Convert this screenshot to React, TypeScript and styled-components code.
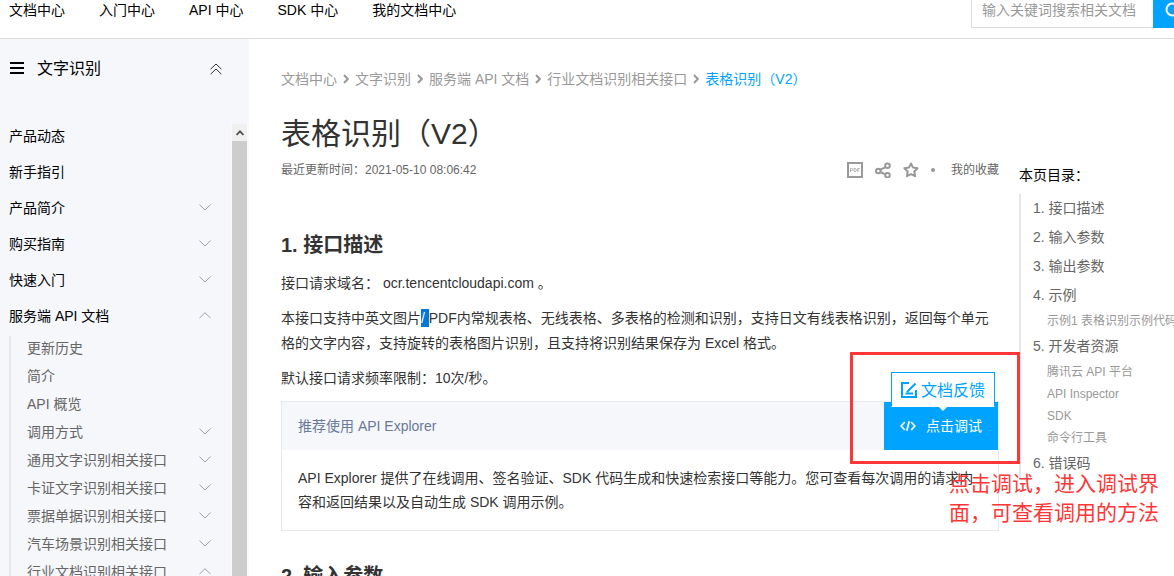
import React from "react";
import styled, { createGlobalStyle } from "styled-components";

const BLUE = "#00a4ff";
const RED = "#fd3737";

const GlobalStyle = createGlobalStyle`
  * { box-sizing: border-box; }
  body {
    margin: 0;
    background: #fff;
    color: #333;
    font: 14px/20px "Liberation Sans", "Noto Sans CJK SC", sans-serif;
  }
  h1, h2, p, ul, ol { margin: 0; padding: 0; }
  ul, ol { list-style: none; }
  a { color: inherit; text-decoration: none; }
  button, input { font: inherit; color: inherit; border: 0; padding: 0; background: none; border-radius: 0; }
  button { cursor: pointer; }
  svg { display: block; flex: none; }
`;

const Page = styled.div`
  height: 100vh;
  display: flex;
  flex-direction: column;
  overflow: hidden;
`;

const Header = styled.header`
  display: flex;
  flex: none;
  justify-content: space-between;
  align-items: flex-start;
  height: 39px;
  border-bottom: 1px solid #dcdcdc;
  overflow: hidden;
`;

const TopNav = styled.nav`
  display: flex;
  gap: 34px;
  padding-left: 9px;
  color: #000;
  white-space: nowrap;
`;

const SearchForm = styled.form`
  display: flex;
  flex: none;
  height: 28px;
  margin-right: -24px;
`;

const SearchInput = styled.input`
  width: 182px;
  height: 28px;
  padding: 0 0 7px 10px;
  border: solid #dcdcdc;
  border-width: 0 0 1px 1px;
  outline: 0;
  &::placeholder { color: #999; opacity: 1; }
`;

const SearchButton = styled.button`
  width: 45px;
  padding: 2px 0 0 12px;
  background: ${BLUE};
  display: flex;
`;

const Columns = styled.div`
  display: flex;
  flex: 1;
  min-height: 0;
`;

const Sidebar = styled.aside`
  width: 249px;
  flex: none;
  display: flex;
  flex-direction: column;
  background: #f5f7fb;
  color: #000;
`;

const SidebarHead = styled.div`
  display: flex;
  align-items: center;
  gap: 12px;
  height: 59px;
  flex: none;
  padding: 0 27px 0 9px;
  font-size: 16px;
  & > button { margin-left: auto; }
`;

const SidebarBody = styled.div`
  display: flex;
  flex: 1;
  min-height: 0;
  margin-top: 20px;
  overflow: hidden;
`;

const Tree = styled.ul`
  flex: 1;
  padding-left: 9px;
`;

const rowStyle = `
  display: flex;
  align-items: center;
  justify-content: space-between;
  width: 100%;
  padding-right: 20px;
  text-align: left;
  white-space: nowrap;
`;

const TreeLink = styled.a<{ $sub?: boolean }>`
  ${rowStyle}
  height: ${(p) => (p.$sub ? 24 : 36)}px;
`;

const TreeToggle = styled.button<{ $sub?: boolean }>`
  ${rowStyle}
  height: ${(p) => (p.$sub ? 24 : 36)}px;
`;

const SubTree = styled.ul`
  display: flex;
  flex-direction: column;
  gap: 4px;
  margin-top: 2px;
  padding-left: 16px;
  border-left: 2px solid #e5e8ed;
  color: #666;
`;

const ScrollTrack = styled.div`
  width: 18px;
  margin-top: 6px;
  padding: 0 2px 0 1px;
  background: #fafafa;
  display: flex;
  flex-direction: column;
`;

const ScrollUp = styled.button`
  height: 17px;
  display: flex;
  align-items: center;
  justify-content: center;
  background: #f0f0f0;
`;

const ScrollThumb = styled.div`
  flex: 1;
  background: #cdcdcd;
`;

const Main = styled.main`
  display: flex;
  flex: 1;
  min-width: 0;
  gap: 20px;
  padding-left: 32px;
`;

const Article = styled.article`
  flex: 1;
  min-width: 0;
  padding-top: 30px;
`;

const Crumbs = styled.nav`
  display: flex;
  align-items: center;
  gap: 6px;
  color: #999;
  white-space: nowrap;
  & > a[aria-current] { color: ${BLUE}; }
`;

const Title = styled.h1`
  margin-top: 25px;
  font-size: 30px;
  line-height: 40px;
  font-weight: 400;
`;

const Meta = styled.div`
  display: flex;
  align-items: center;
  justify-content: space-between;
  margin-top: 6px;
  font-size: 12px;
  color: #666;
`;

const Tools = styled.div`
  display: flex;
  align-items: center;
  gap: 12px;
  color: #999;
  & > a { color: #666; margin-left: 4px; }
`;

const Dot = styled.span`
  width: 4px;
  height: 4px;
  border-radius: 2px;
  background: #999;
`;

const Heading = styled.h2<{ $first?: boolean }>`
  margin-top: ${(p) => (p.$first ? 51 : 31)}px;
  font-size: 20px;
  line-height: 28px;
  font-weight: 700;
`;

const Prose = styled.div`
  display: flex;
  flex-direction: column;
  gap: 10px;
  padding: 12px 0 10px;
  line-height: 25px;
`;

const Selected = styled.mark`
  padding: 1px 0;
  background: #0078d7;
  color: #fff;
`;

const Explorer = styled.section`
  position: relative;
  border: 1px solid #e5e8ed;
`;

const ExplorerHead = styled.div`
  display: flex;
  justify-content: space-between;
  align-items: center;
  height: 48px;
  padding-left: 16px;
  background: #f5f7fb;
  color: #6b7a99;
`;

const DebugButton = styled.button`
  display: flex;
  align-items: center;
  gap: 10px;
  height: 48px;
  padding: 0 16px;
  background: ${BLUE};
  color: #fff;
`;

const ExplorerText = styled.p`
  padding: 16px;
  line-height: 24px;
`;

const Feedback = styled.button`
  position: absolute;
  z-index: 1;
  top: -30px;
  right: 3px;
  display: flex;
  align-items: center;
  gap: 4px;
  height: 35px;
  padding: 2px 9px 0;
  border: 1px solid ${BLUE};
  border-bottom-color: #fff;
  background: #fff;
  color: ${BLUE};
  font-size: 16px;
  white-space: nowrap;
  &::after {
    content: "";
    position: absolute;
    top: 100%;
    left: 50%;
    margin-left: -5px;
    border: 5px solid transparent;
    border-top-color: #fff;
    border-bottom: 0;
  }
`;

const RedFrame = styled.div`
  position: absolute;
  z-index: 2;
  top: -50px;
  right: -22px;
  width: 170px;
  height: 112px;
  border: 3px solid ${RED};
  pointer-events: none;
`;

const RedNote = styled.p`
  position: absolute;
  z-index: 2;
  top: 67px;
  right: -162px;
  width: 211px;
  font-size: 21px;
  line-height: 29px;
  color: ${RED};
  pointer-events: none;
`;

const Toc = styled.aside`
  width: 155px;
  flex: none;
  padding-top: 126px;
  white-space: nowrap;
  overflow: hidden;
`;

const TocTitle = styled.div`
  color: #000;
`;

const TocList = styled.ol`
  margin-top: 9px;
  padding-left: 12px;
  border-left: 2px solid #e5e5e5;
  line-height: 29px;
  color: #666;
`;

const TocSub = styled.ol`
  padding-left: 14px;
  font-size: 12px;
  line-height: 22px;
  color: #999;
`;

const Block = styled.a`
  display: block;
`;

const Chevron = ({ up }: { up?: boolean }) => (
  <svg width="12" height="8" viewBox="0 0 12 8" fill="none" stroke="#9a9fa8">
    <path d={up ? "M.5 6 6 .7 11.5 6" : "M.5 .7 6 6 11.5 .7"} />
  </svg>
);

const CrumbArrow = () => (
  <svg width="6" height="10" viewBox="0 0 6 10" fill="none" stroke="#999" strokeWidth="2">
    <path d="M1 1l3.800 4L1 9" />
  </svg>
);

type Node = { label: string; state?: "open" | "closed"; children?: Node[] };

const tree: Node[] = [
  { label: "产品动态" },
  { label: "新手指引" },
  { label: "产品简介", state: "closed" },
  { label: "购买指南", state: "closed" },
  { label: "快速入门", state: "closed" },
  {
    label: "服务端 API 文档",
    state: "open",
    children: [
      { label: "更新历史" },
      { label: "简介" },
      { label: "API 概览" },
      { label: "调用方式", state: "closed" },
      { label: "通用文字识别相关接口", state: "closed" },
      { label: "卡证文字识别相关接口", state: "closed" },
      { label: "票据单据识别相关接口", state: "closed" },
      { label: "汽车场景识别相关接口", state: "closed" },
      { label: "行业文档识别相关接口", state: "open" },
    ],
  },
];

const TreeItem = ({ node, sub }: { node: Node; sub?: boolean }) => (
  <li>
    {node.state ? (
      <TreeToggle type="button" $sub={sub} aria-expanded={node.state === "open"}>
        {node.label}
        <Chevron up={node.state === "open"} />
      </TreeToggle>
    ) : (
      <TreeLink href="#" $sub={sub}>{node.label}</TreeLink>
    )}
    {node.children && (
      <SubTree>
        {node.children.map((c) => <TreeItem key={c.label} node={c} sub />)}
      </SubTree>
    )}
  </li>
);

const toc: { label: string; children?: string[] }[] = [
  { label: "1. 接口描述" },
  { label: "2. 输入参数" },
  { label: "3. 输出参数" },
  { label: "4. 示例", children: ["示例1 表格识别示例代码"] },
  { label: "5. 开发者资源", children: ["腾讯云 API 平台", "API Inspector", "SDK", "命令行工具"] },
  { label: "6. 错误码" },
];

const crumbs = ["文档中心", "文字识别", "服务端 API 文档", "行业文档识别相关接口"];

export default function App() {
  return (
    <Page>
      <GlobalStyle />
      <Header>
        <TopNav>
          {["文档中心", "入门中心", "API 中心", "SDK 中心", "我的文档中心"].map((t) => (
            <a href="#" key={t}>{t}</a>
          ))}
        </TopNav>
        <SearchForm onSubmit={(e) => e.preventDefault()}>
          <SearchInput aria-label="搜索" placeholder="输入关键词搜索相关文档" />
          <SearchButton aria-label="搜索">
            <svg width="18" height="18" viewBox="0 0 18 18" fill="none" stroke="#fff" strokeWidth="2">
              <circle cx="7.5" cy="7.5" r="6" />
              <path d="M12 12l5 5" />
            </svg>
          </SearchButton>
        </SearchForm>
      </Header>
      <Columns>
        <Sidebar>
          <SidebarHead>
            <svg width="16" height="15" viewBox="0 0 16 15" stroke="#000" strokeWidth="2">
              <path d="M1 2h14M1 7h14M1 12h14" />
            </svg>
            文字识别
            <button type="button" aria-label="收起">
              <svg width="12" height="12" viewBox="0 0 12 12" fill="none" stroke="#333">
                <path d="M.6 6.2 6 1l5.400 5.200M.6 11.200 6 6l5.400 5.200" />
              </svg>
            </button>
          </SidebarHead>
          <SidebarBody>
            <Tree>
              {tree.map((n) => <TreeItem key={n.label} node={n} />)}
            </Tree>
            <ScrollTrack>
              <ScrollUp type="button" aria-label="向上滚动">
                <svg width="8" height="6" viewBox="0 0 8 6" fill="none" stroke="#505050" strokeWidth="1.8">
                  <path d="M.6 5 4 1.4 7.4 5" />
                </svg>
              </ScrollUp>
              <ScrollThumb />
            </ScrollTrack>
          </SidebarBody>
        </Sidebar>
        <Main>
          <Article>
            <Crumbs>
              {crumbs.map((c) => (
                <React.Fragment key={c}>
                  <a href="#">{c}</a>
                  <CrumbArrow />
                </React.Fragment>
              ))}
              <a href="#" aria-current="page">表格识别（V2）</a>
            </Crumbs>
            <Title>表格识别（V2）</Title>
            <Meta>
              <span>最近更新时间：2021-05-10 08:06:42</span>
              <Tools>
                <button type="button" aria-label="PDF">
                  <svg width="16" height="16" viewBox="0 0 16 16" fill="none" stroke="#999">
                    <path d="M1 1h14v14H1z" strokeWidth="2" />
                    <path d="M3.5 10V6.5h1.3q1 0 1 1t-1 1H3.5M7 6.5V9.5h1q1.4 0 1.4-1.5T8 6.5zM10.7 10V6.5h2M10.7 8.2h1.7" strokeWidth=".7" />
                  </svg>
                </button>
                <button type="button" aria-label="分享">
                  <svg width="16" height="16" viewBox="0 0 16 16" fill="none" stroke="#999" strokeWidth="2">
                    <circle cx="3.3" cy="9" r="2.3" />
                    <circle cx="12.500" cy="3.800" r="2.300" />
                    <circle cx="12.500" cy="13.200" r="2.300" />
                    <path d="M5.300 7.900l5.200-2.800M5.300 10l5.200 2.400" />
                  </svg>
                </button>
                <button type="button" aria-label="收藏">
                  <svg width="16" height="16" viewBox="0 0 16 16" fill="none" stroke="#999" strokeWidth="2" strokeLinejoin="round">
                    <path d="M8 1.500l2 4.100 4.600.7-3.300 3.200.8 4.700L8 12.100l-4.100 2.100.8-4.700L1.400 6.300 6 5.600z" />
                  </svg>
                </button>
                <Dot />
                <a href="#">我的收藏</a>
              </Tools>
            </Meta>
            <Heading $first>1. 接口描述</Heading>
            <Prose>
              <p>接口请求域名： ocr.tencentcloudapi.com 。</p>
              <p>
                本接口支持中英文图片<Selected>/ </Selected>PDF内常规表格、无线表格、多表格的检测和识别，支持日文有线表格识别，返回每个单元格的文字内容，支持旋转的表格图片识别，且支持将识别结果保存为 Excel 格式。
              </p>
              <p>默认接口请求频率限制：10次/秒。</p>
            </Prose>
            <Explorer>
              <ExplorerHead>
                推荐使用 API Explorer
                <DebugButton type="button">
                  <svg width="16" height="12" viewBox="0 0 16 12" fill="none" stroke="#fff" strokeWidth="1.7">
                    <path d="M4.800 2 1.200 6l3.600 4M11.200 2l3.600 4-3.600 4M9.200 1.200 6.800 10.800" />
                  </svg>
                  点击调试
                </DebugButton>
              </ExplorerHead>
              <ExplorerText>
                API Explorer 提供了在线调用、签名验证、SDK 代码生成和快速检索接口等能力。您可查看每次调用的请求内容和返回结果以及自动生成 SDK 调用示例。
              </ExplorerText>
              <Feedback type="button">
                <svg width="16" height="18" viewBox="0 0 16 18" fill="none" stroke={BLUE} strokeWidth="2">
                  <path d="M8 1H1v14h14V8" />
                  <path d="M14.500 1.500 6 10M4.500 11.500H12" />
                </svg>
                文档反馈
              </Feedback>
              <RedFrame />
              <RedNote>点击调试，进入调试界面，可查看调用的方法</RedNote>
            </Explorer>
            <Heading>2. 输入参数</Heading>
          </Article>
          <Toc>
            <TocTitle>本页目录：</TocTitle>
            <TocList>
              {toc.map((t) => (
                <li key={t.label}>
                  <Block href="#">{t.label}</Block>
                  {t.children && (
                    <TocSub>
                      {t.children.map((c) => (
                        <li key={c}><Block href="#">{c}</Block></li>
                      ))}
                    </TocSub>
                  )}
                </li>
              ))}
            </TocList>
          </Toc>
        </Main>
      </Columns>
    </Page>
  );
}
